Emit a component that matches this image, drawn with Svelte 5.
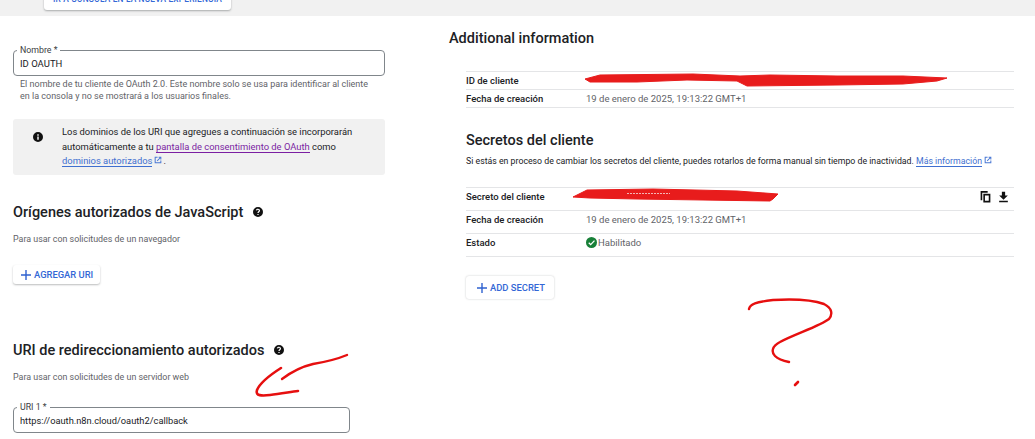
<script>
	const secretRows = [
		{ label: 'Fecha de creación', value: '19 de enero de 2025, 19:13:22 GMT+1' }
	];
	const helpPath =
		'M12 2a10 10 0 1 0 0 20 10 10 0 0 0 0-20zm1.200 16.200h-2.400v-2.400h2.400zm2.400-7.300c-.8 1.100-2 1.500-2.300 2.900h-2.400c.1-2.400 1.600-2.900 2.400-3.900.6-.8.300-2.300-1.300-2.300-1.100 0-1.700.8-1.900 1.600L7.600 8.400C8.100 6.700 9.700 5.500 12 5.500c3.200 0 5 3 3.600 5.400z';
	const extPath =
		'M4 4h7v2.400H6.400v11.200h11.200V13H20v7H4zM13.500 4H20v6.500h-2.400V8l-6.800 6.800-1.600-1.600L16 6.400h-2.500z';
</script>

<div class="page">
	<div class="topbar">
		<button class="migrate">IR A CONSOLA EN LA NUEVA EXPERIENCIA</button>
	</div>

	<div class="columns">
		<section class="left">
			<div class="field name-field">
				<span class="field-label">Nombre *</span>
				<span class="field-value">ID OAUTH</span>
			</div>
			<p class="hint">
				El nombre de tu cliente de OAuth 2.0. Este nombre solo se usa para identificar al cliente en
				la consola y no se mostrará a los usuarios finales.
			</p>

			<div class="notice">
				<svg class="notice-icon" viewBox="0 0 24 24" width="12" height="12">
					<path
						d="M12 2a10 10 0 1 0 0 20 10 10 0 0 0 0-20zm1.500 15.500h-3V11h3zm0-8.200h-3V6.500h3z"
						fill="#111"
					/>
				</svg>
				<p>
					Los dominios de los URI que agregues a continuación se incorporarán automáticamente a tu
					<a class="visited" href="#top">pantalla de consentimiento de OAuth</a> como
					<a href="#top">dominios autorizados</a><svg class="ext" viewBox="0 0 24 24" width="10" height="10">
						<path d={extPath} fill="#4a78d4" />
					</svg>.
				</p>
			</div>

			<h2 class="origins">
				Orígenes autorizados de JavaScript
				<svg viewBox="0 0 24 24" width="12" height="12"><path d={helpPath} fill="#111" /></svg>
			</h2>
			<p class="sub">Para usar con solicitudes de un navegador</p>
			<button class="raised add-uri">
				<svg viewBox="0 0 12 12" width="12" height="12">
					<path d="M6 1v10M1 6h10" stroke="#2f62d0" stroke-width="1.400" fill="none" />
				</svg>
				AGREGAR URI
			</button>

			<h2 class="redirects">
				URI de redireccionamiento autorizados
				<svg viewBox="0 0 24 24" width="12" height="12"><path d={helpPath} fill="#111" /></svg>
			</h2>
			<p class="sub">Para usar con solicitudes de un servidor web</p>
			<div class="field uri-field">
				<span class="field-label">URI 1 *</span>
				<span class="field-value">https://oauth.n8n.cloud/oauth2/callback</span>
			</div>
		</section>

		<section class="right">
			<h2 class="additional">Additional information</h2>

			<div class="details">
				<div class="table first">
					<div class="row client-row">
						<span class="key">ID de cliente</span>
						<span class="val"></span>
					</div>
					<div class="row client-row">
						<span class="key">Fecha de creación</span>
						<span class="val">19 de enero de 2025, 19:13:22 GMT+1</span>
					</div>
				</div>

				<h2 class="secrets">Secretos del cliente</h2>
				<p class="secrets-text">
					Si estás en proceso de cambiar los secretos del cliente, puedes rotarlos de forma manual sin
					tiempo de inactividad. <a href="#top">Más información</a><svg class="ext" viewBox="0 0 24 24" width="10" height="10">
						<path d={extPath} fill="#4a78d4" />
					</svg>
				</p>

				<div class="table">
					<div class="row secret-row">
						<span class="key">Secreto del cliente</span>
						<span class="val dots">••••</span>
						<span class="actions">
							<svg viewBox="0 0 24 24" width="13" height="13">
								<path
									d="M3 2h13v3H6v14H3zM8 7h13v16H8zm3 3v10h7V10z"
									fill="#111"
									fill-rule="evenodd"
								/>
							</svg>
							<svg viewBox="0 0 24 24" width="13" height="13">
								<path d="M9 3h6v7h5l-8 8-8-8h5zM4 20h16v2.500H4z" fill="#111" />
							</svg>
						</span>
					</div>
					{#each secretRows as row}
						<div class="row secret-row">
							<span class="key">{row.label}</span>
							<span class="val">{row.value}</span>
						</div>
					{/each}
					<div class="row secret-row">
						<span class="key">Estado</span>
						<span class="val status">
							<svg viewBox="0 0 24 24" width="11" height="11">
								<circle cx="12" cy="12" r="12" fill="#188038" />
								<path d="M6 12.500l4.200 4.200L18.500 8" stroke="#fff" stroke-width="2.800" fill="none" />
							</svg>
							Habilitado
						</span>
					</div>
				</div>

				<button class="raised add-secret">
					<svg viewBox="0 0 12 12" width="12" height="12">
						<path d="M6 1v10M1 6h10" stroke="#2f62d0" stroke-width="1.400" fill="none" />
					</svg>
					ADD SECRET
				</button>
			</div>
		</section>
	</div>

	<!-- red marker scribbles drawn on top of the screenshot -->
	<svg class="scribbles" viewBox="0 0 1035 439" width="1035" height="439">
		<g fill="#e81c1c" stroke="#e81c1c" stroke-width="1" stroke-linejoin="round">
			<path d="M585 79 L600 75 L693 74 L740 76 L770 75 L837 76 L903 76 L947 78 L937 81 L903 84 L837 85 L747 86 L737 81 L687 80 L637 82 L590 82Z" />
			<path d="M573 197 L587 190 L653 189 L737 191 L778 194 L773 199 L770 201 L703 200 L637 199 L590 198Z" />
		</g>
		<path d="M627 193.500H670" stroke="#f3b5b5" stroke-width="1" stroke-dasharray="2 1" />
		<g fill="none" stroke="#e60f0f" stroke-linecap="round" stroke-linejoin="round">
			<path stroke-width="2.400" d="M347 355 C335 360 325 362 313 364 C300 367 290 373 282 379" />
			<path stroke-width="2.600" d="M281 368 C270 375 260 383 257 390 C255 396 262 396 270 395 C280 394 290 392 298 391" />
			<path
				stroke-width="2.400"
				d="M749 309 C750 304 756 302 773 300 C790 299 810 299 824 304 C832 308 833 314 829 319 C820 326 795 334 780 342 C772 346 771 352 775 356 C779 360 784 361 789 362"
			/>
			<path stroke-width="2.600" d="M798 382 L795 385" />
		</g>
	</svg>
</div>

<style>
	:global(body) {
		margin: 0;
		background: #fff;
	}
	.page {
		position: relative;
		width: 1035px;
		height: 439px;
		overflow: hidden;
		font-family: Roboto, 'Liberation Sans', sans-serif;
		color: #202124;
	}
	p,
	h2 {
		margin: 0;
	}
	a {
		color: #3f6fd0;
		text-decoration: none;
		border-bottom: 1px solid #3f6fd0;
	}
	a.visited {
		color: #7b1fa2;
		border-bottom-color: #7b1fa2;
	}
	button {
		font-family: inherit;
		cursor: pointer;
	}
	.topbar {
		height: 16px;
		background: #f1f1f1;
		padding-left: 44px;
		overflow: hidden;
	}
	.migrate {
		display: block;
		width: 187px;
		height: 26px;
		margin-top: -16px;
		padding: 4px 0 0;
		border: 0;
		border-radius: 3px;
		background: #fff;
		box-shadow: 0 1px 2px rgba(60, 64, 67, 0.4);
		color: #3367d6;
		font-size: 8.300px;
		font-weight: 500;
		letter-spacing: 0.2px;
		line-height: 12px;
		white-space: nowrap;
	}
	.columns {
		display: grid;
		grid-template-columns: 449px 1fr;
	}
	.left {
		padding: 34px 0 0 13px;
	}
	.field {
		position: relative;
		box-sizing: border-box;
		height: 26px;
		border: 1px solid #80868b;
		border-radius: 4px;
		padding: 6px 6px 0;
		font-size: 9.500px;
		line-height: 13px;
	}
	.field-label {
		position: absolute;
		top: -7px;
		left: 3px;
		padding: 0 3px;
		background: #fff;
		font-size: 8.800px;
		line-height: 12px;
		color: #3c4043;
	}
	.name-field {
		width: 372px;
	}
	.hint {
		width: 355px;
		margin: 2px 0 0 7px;
		font-size: 9px;
		line-height: 12px;
		color: #5f6368;
	}
	.notice {
		display: flex;
		box-sizing: border-box;
		width: 372px;
		height: 56px;
		margin-top: 17px;
		padding: 6px 30px 0 19px;
		gap: 18px;
		background: #f1f1f1;
		border-radius: 3px;
		font-size: 9.400px;
		line-height: 14.500px;
	}
	.notice-icon {
		flex: none;
		margin-top: 6px;
		width: 12px;
	}
	.ext {
		margin-left: 1px;
		vertical-align: -1px;
	}
	h2 {
		font-size: 14.500px;
		font-weight: 500;
		line-height: 20px;
		color: #202124;
	}
	h2 svg {
		margin-left: 5px;
		vertical-align: -1px;
	}
	.origins {
		margin-top: 28px;
	}
	.redirects {
		margin-top: 57px;
	}
	.sub {
		margin-top: 10px;
		font-size: 8.900px;
		line-height: 12px;
		color: #5f6368;
	}
	.raised {
		display: flex;
		align-items: center;
		gap: 2px;
		padding: 0;
		border: 0;
		border-radius: 3px;
		background: #fff;
		color: #3367d6;
		font-size: 9.400px;
		font-weight: 500;
		box-shadow: 0 1px 2px rgba(60, 64, 67, 0.35);
	}
	.add-uri {
		width: 87px;
		height: 19px;
		margin-top: 20px;
		padding-left: 7px;
	}
	.uri-field {
		width: 337px;
		margin-top: 24px;
		font-size: 9.300px;
	}
	.right {
		padding-top: 13px;
	}
	.details {
		padding: 22px 21px 0 17px;
	}
	.table {
		border-top: 1px solid #e4e5e7;
		border-bottom: 1px solid #e4e5e7;
	}
	.row {
		display: flex;
		align-items: center;
		font-size: 9.500px;
	}
	.row + .row {
		border-top: 1px solid #e4e5e7;
	}
	.client-row {
		height: 17px;
	}
	.secret-row {
		height: 17px;
		padding-bottom: 5px;
	}
	.key {
		flex: none;
		width: 120px;
		font-weight: 500;
	}
	.val {
		color: #5f6368;
	}
	.status {
		display: flex;
		align-items: center;
		gap: 1px;
	}
	.dots {
		letter-spacing: 1px;
	}
	.actions {
		display: flex;
		gap: 5px;
		margin-left: auto;
		padding-right: 4px;
	}
	.secrets {
		margin-top: 23px;
	}
	.secrets-text {
		margin-top: 4px;
		height: 32px;
		font-size: 8.750px;
		line-height: 13px;
		white-space: nowrap;
		color: #202124;
	}
	.add-secret {
		width: 88px;
		height: 23px;
		margin-top: 19px;
		padding-left: 10px;
		box-shadow: 0 0 2px rgba(60, 64, 67, 0.3);
	}
	.scribbles {
		position: absolute;
		top: 0;
		left: 0;
		pointer-events: none;
	}
</style>
